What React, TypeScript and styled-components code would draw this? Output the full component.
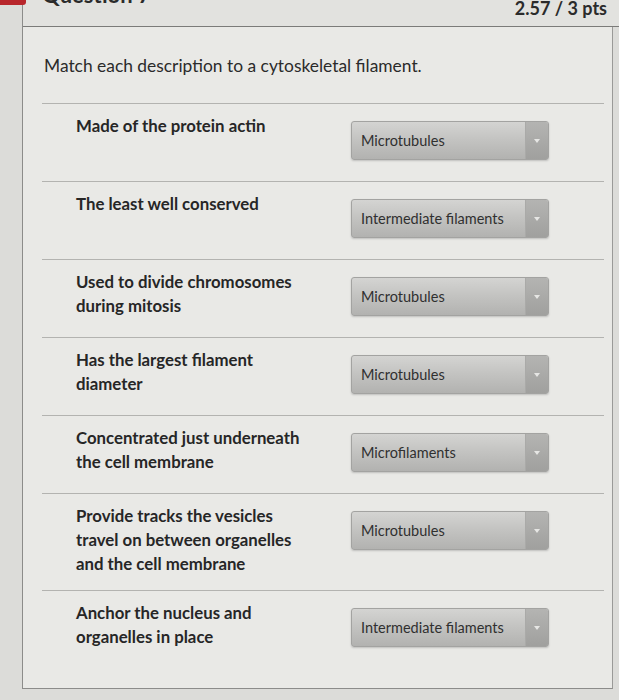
import React from 'react';
import styled, { createGlobalStyle } from 'styled-components';

interface MatchItem {
  prompt: string;
  answer: string;
}

const items: MatchItem[] = [
  { prompt: 'Made of the protein actin', answer: 'Microtubules' },
  { prompt: 'The least well conserved', answer: 'Intermediate filaments' },
  { prompt: 'Used to divide chromosomes during mitosis', answer: 'Microtubules' },
  { prompt: 'Has the largest filament diameter', answer: 'Microtubules' },
  { prompt: 'Concentrated just underneath the cell membrane', answer: 'Microfilaments' },
  {
    prompt: 'Provide tracks the vesicles travel on between organelles and the cell membrane',
    answer: 'Microtubules',
  },
  { prompt: 'Anchor the nucleus and organelles in place', answer: 'Intermediate filaments' },
];

const GlobalStyle = createGlobalStyle`
  html, body {
    margin: 0;
    padding: 0;
    background: #dcdcd9;
    font-family: Lato, "Open Sans", "Liberation Sans", sans-serif;
    color: #2b2b2b;
    overflow: hidden;
  }
`;

const Page = styled.div`
  display: flex;
  align-items: flex-start;
  width: 619px;
  height: 700px;
  padding-right: 6px;
  box-sizing: border-box;
  overflow: hidden;
`;

const Gutter = styled.div`
  width: 22px;
  flex-shrink: 0;
  position: relative;
  z-index: 1;
`;

const FlagTab = styled.div`
  width: 26px;
  height: 5px;
  background: #b8262b;
  border-bottom-right-radius: 3px;
`;

const Card = styled.div`
  flex: 1;
  background: #e9e9e6;
  border-left: 1px solid #8c8c8a;
  border-right: 1px solid #9a9a98;
  border-bottom: 1px solid #8c8c8a;
  padding-bottom: 20px;
`;

const Header = styled.div`
  display: flex;
  justify-content: space-between;
  align-items: flex-end;
  height: 45px;
  margin-top: -18px;
  margin-right: -7px;
  padding: 0 12px 6px 19px;
  box-sizing: border-box;
  border-bottom: 1px solid #7b7b79;
  background: #e2e2df;
`;

const QuestionTitle = styled.h2`
  margin: 0 0 14px;
  font-size: 22px;
  font-weight: 700;
  line-height: 1;
`;

const Points = styled.span`
  font-size: 18px;
  font-weight: 700;
  line-height: 1.2;
`;

const Prompt = styled.p`
  margin: 0;
  padding: 27px 0 25px 21px;
  font-size: 17.4px;
  line-height: 24px;
`;

const Rows = styled.div`
  margin: 0 8px 0 19px;
`;

const Row = styled.div`
  display: grid;
  grid-template-columns: 276px 197px;
  align-items: start;
  min-height: 53px;
  padding: 10px 0 14px 34px;
  border-top: 1px solid #b3b3b0;
`;

const Label = styled.div`
  max-width: 236px;
  font-size: 16.8px;
  font-weight: 700;
  line-height: 24px;
  color: #262626;
`;

const Select = styled.div`
  display: flex;
  height: 39px;
  margin-top: 7px;
  margin-left: -1px;
  box-sizing: border-box;
  border: 1px solid #a3a3a1;
  border-radius: 3px;
  overflow: hidden;
  background: linear-gradient(#d4d4d2, #c4c4c2 45%, #b2b2b0);
  box-shadow: 0 1px 2px rgba(0, 0, 0, 0.18);
`;

const SelectValue = styled.span`
  flex: 1;
  display: flex;
  align-items: center;
  padding-left: 9px;
  font-size: 14.5px;
  color: #303030;
  white-space: nowrap;
`;

const SelectArrow = styled.span`
  width: 22px;
  display: flex;
  align-items: center;
  justify-content: center;
  background: linear-gradient(#b4b4b2, #a0a09e);
  border-left: 1px solid #aaaaa8;

  &::after {
    content: '';
    border-left: 3px solid transparent;
    border-right: 3px solid transparent;
    border-top: 4px solid #e6e6e4;
  }
`;

const MatchRow: React.FC<MatchItem> = ({ prompt, answer }) => (
  <Row>
    <Label>{prompt}</Label>
    <Select>
      <SelectValue>{answer}</SelectValue>
      <SelectArrow />
    </Select>
  </Row>
);

export default function App() {
  return (
    <>
      <GlobalStyle />
      <Page>
        <Gutter>
          <FlagTab />
        </Gutter>
        <Card>
          <Header>
            <QuestionTitle>Question 7</QuestionTitle>
            <Points>2.57 / 3 pts</Points>
          </Header>
          <Prompt>Match each description to a cytoskeletal filament.</Prompt>
          <Rows>
            {items.map((item) => (
              <MatchRow key={item.prompt} {...item} />
            ))}
          </Rows>
        </Card>
      </Page>
    </>
  );
}
